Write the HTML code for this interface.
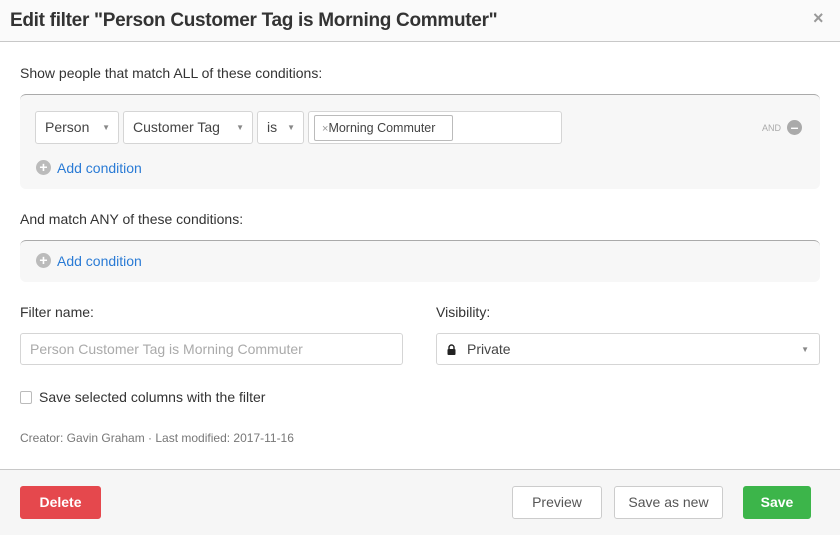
<!DOCTYPE html>
<html><head><style>
*{box-sizing:border-box;margin:0;padding:0}
body{width:840px;height:535px;background:#fff;font-family:"Liberation Sans",sans-serif;color:#333;position:relative;overflow:hidden}
.a{position:absolute}
.sel{position:absolute;border:1px solid #d5d5d5;border-radius:3px;background:#fff;height:33px;font-size:14px;line-height:31px;padding-left:9px;color:#444}
.sel .c{position:absolute;right:8px;top:0;font-size:8px;color:#888}
.btn{position:absolute;height:33px;border:1px solid #ccc;border-radius:3px;background:#fff;font-size:14px;line-height:31px;text-align:center;color:#555}
.plus{position:absolute;width:15px;height:15px;border-radius:50%;background:#bbb;color:#fff;font-size:14px;line-height:15px;text-align:center;font-weight:bold}
.lnk{position:absolute;color:#2a7bd5;font-size:14px}
</style></head><body>
<div class="a" style="left:0;top:0;width:840px;height:42px;background:#fafafa;border-bottom:1px solid #c8c8c8"></div>
<div class="a" style="left:10px;top:10px;font-size:19px;font-weight:bold;color:#333;letter-spacing:-0.3px">Edit filter "Person Customer Tag is Morning Commuter"</div>
<div class="a" style="left:813px;top:8px;font-size:18px;color:#999;font-weight:bold">×</div>

<div class="a" style="left:20px;top:65px;font-size:14px">Show people that match ALL of these conditions:</div>
<div class="a" style="left:20px;top:94px;width:800px;height:95px;background:#f7f7f7;border-top:1px solid #aaa;border-radius:6px"></div>
<div class="sel" style="left:35px;top:111px;width:84px">Person<span class="c">▼</span></div>
<div class="sel" style="left:123px;top:111px;width:130px">Customer Tag<span class="c">▼</span></div>
<div class="sel" style="left:257px;top:111px;width:47px">is<span class="c">▼</span></div>
<div class="sel" style="left:308px;top:111px;width:254px"></div>
<div class="a" style="left:314px;top:115px;width:139px;height:26px;border:1px solid #bbb;border-radius:2px;background:#fff;font-size:12.5px;line-height:24px;padding-left:7px;color:#444"><span style="color:#999;font-size:11px">×</span>Morning Commuter</div>
<div class="a" style="left:762px;top:123px;font-size:9px;color:#aaa">AND</div>
<div class="plus" style="left:787px;top:120px;background:#aaa">–</div>
<div class="plus" style="left:36px;top:160px">+</div>
<div class="lnk" style="left:57px;top:160px">Add condition</div>

<div class="a" style="left:20px;top:211px;font-size:14px">And match ANY of these conditions:</div>
<div class="a" style="left:20px;top:240px;width:800px;height:42px;background:#f7f7f7;border-top:1px solid #aaa;border-radius:6px"></div>
<div class="plus" style="left:36px;top:253px">+</div>
<div class="lnk" style="left:57px;top:253px">Add condition</div>

<div class="a" style="left:20px;top:304px;font-size:14px">Filter name:</div>
<div class="a" style="left:436px;top:304px;font-size:14px">Visibility:</div>
<div class="sel" style="left:20px;top:333px;width:383px;height:32px;color:#aaa">Person Customer Tag is Morning Commuter</div>
<div class="sel" style="left:436px;top:333px;width:384px;height:32px;padding-left:30px">Private<span class="c" style="right:10px">▼</span></div>
<svg class="a" style="left:447px;top:344px" width="9" height="11"><path d="M2 5V3.5a2.5 2.5 0 0 1 5 0V5" stroke="#222" stroke-width="1.4" fill="none"/><rect x="0.5" y="5" width="8" height="6" rx="1" fill="#222"/></svg>
<div class="a" style="left:20px;top:391px;width:12px;height:13px;border:1px solid #bbb;border-radius:2px"></div>
<div class="a" style="left:39px;top:389px;font-size:14px">Save selected columns with the filter</div>
<div class="a" style="left:20px;top:431px;font-size:12px;color:#777">Creator: Gavin Graham · Last modified: 2017-11-16</div>

<div class="a" style="left:0;top:469px;width:840px;height:66px;background:#f6f6f6;border-top:1px solid #c8c8c8"></div>
<div class="btn" style="left:20px;top:486px;width:81px;background:#e5484d;border-color:#e5484d;color:#fff;font-weight:bold">Delete</div>
<div class="btn" style="left:512px;top:486px;width:90px">Preview</div>
<div class="btn" style="left:614px;top:486px;width:109px">Save as new</div>
<div class="btn" style="left:743px;top:486px;width:68px;background:#3cb54a;border-color:#3cb54a;color:#fff;font-weight:bold">Save</div>
</body></html>
